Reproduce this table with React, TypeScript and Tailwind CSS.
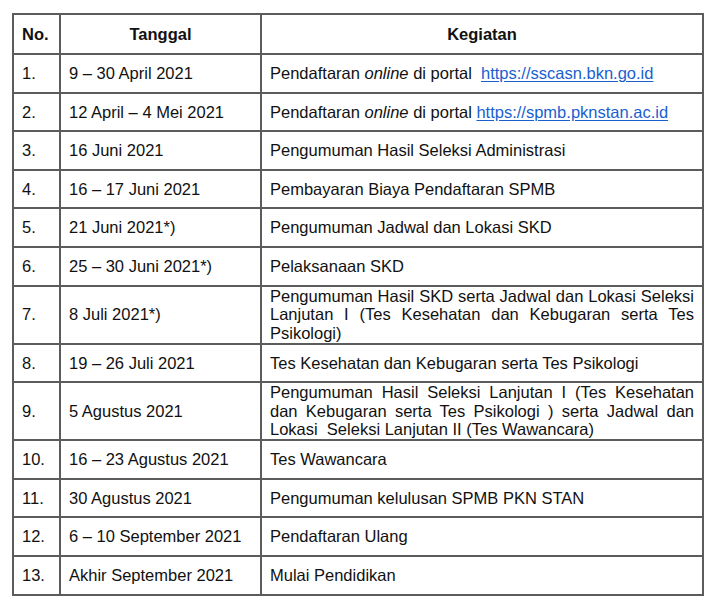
import React from 'react';

type Row = {
  no: string;
  date: string;
  activity: React.ReactNode;
  tall?: boolean;
};

const Link = ({ href }: { href: string }) => (
  <a href={href} className="text-[#1a5fd0] underline underline-offset-2">
    {href}
  </a>
);

const rows: Row[] = [
  {
    no: '1.',
    date: '9 – 30 April 2021',
    activity: (
      <>
        Pendaftaran <i>online</i> di portal{'\u00a0 '}
        <Link href="https://sscasn.bkn.go.id" />
      </>
    ),
  },
  {
    no: '2.',
    date: '12 April – 4 Mei 2021',
    activity: (
      <>
        Pendaftaran <i>online</i> di portal <Link href="https://spmb.pknstan.ac.id" />
      </>
    ),
  },
  { no: '3.', date: '16 Juni 2021', activity: 'Pengumuman Hasil Seleksi Administrasi' },
  { no: '4.', date: '16 – 17 Juni 2021', activity: 'Pembayaran Biaya Pendaftaran SPMB' },
  { no: '5.', date: '21 Juni 2021*)', activity: 'Pengumuman Jadwal dan Lokasi SKD' },
  { no: '6.', date: '25 – 30 Juni 2021*)', activity: 'Pelaksanaan SKD' },
  {
    no: '7.',
    date: '8 Juli 2021*)',
    activity:
      'Pengumuman Hasil SKD serta Jadwal dan Lokasi Seleksi Lanjutan I (Tes Kesehatan dan Kebugaran serta Tes Psikologi)',
    tall: true,
  },
  { no: '8.', date: '19 – 26 Juli 2021', activity: 'Tes Kesehatan dan Kebugaran serta Tes Psikologi' },
  {
    no: '9.',
    date: '5 Agustus 2021',
    activity:
      'Pengumuman Hasil Seleksi Lanjutan I (Tes Kesehatan dan Kebugaran serta Tes Psikologi ) serta Jadwal dan Lokasi\u00a0 Seleksi Lanjutan II (Tes Wawancara)',
    tall: true,
  },
  { no: '10.', date: '16 – 23 Agustus 2021', activity: 'Tes Wawancara' },
  { no: '11.', date: '30 Agustus 2021', activity: 'Pengumuman kelulusan SPMB PKN STAN' },
  { no: '12.', date: '6 – 10 September 2021', activity: 'Pendaftaran Ulang' },
  { no: '13.', date: 'Akhir September 2021', activity: 'Mulai Pendidikan' },
];

const cell = 'border-2 border-[#5c5c5c] px-2 align-middle';

export default function App() {
  return (
    <div className="w-[712px] h-[606px] bg-white pt-[13px] pl-[12px] font-['Liberation_Sans',Arial,sans-serif] text-[16.5px] leading-[18.5px] text-[#111]">
      <table className="border-collapse w-[690px] table-fixed">
        <colgroup>
          <col className="w-[47px]" />
          <col className="w-[201px]" />
          <col className="w-[442px]" />
        </colgroup>
        <thead>
          <tr className="h-[40px] font-bold">
            <th className={`${cell} text-left`}>No.</th>
            <th className={`${cell} text-center`}>Tanggal</th>
            <th className={`${cell} text-center`}>Kegiatan</th>
          </tr>
        </thead>
        <tbody>
          {rows.map((r) => (
            <tr key={r.no} className={r.tall ? 'h-[58px]' : 'h-[38.6px]'}>
              <td className={cell}>{r.no}</td>
              <td className={cell}>{r.date}</td>
              <td className={`${cell} ${r.tall ? 'text-justify' : ''}`}>{r.activity}</td>
            </tr>
          ))}
        </tbody>
      </table>
    </div>
  );
}
